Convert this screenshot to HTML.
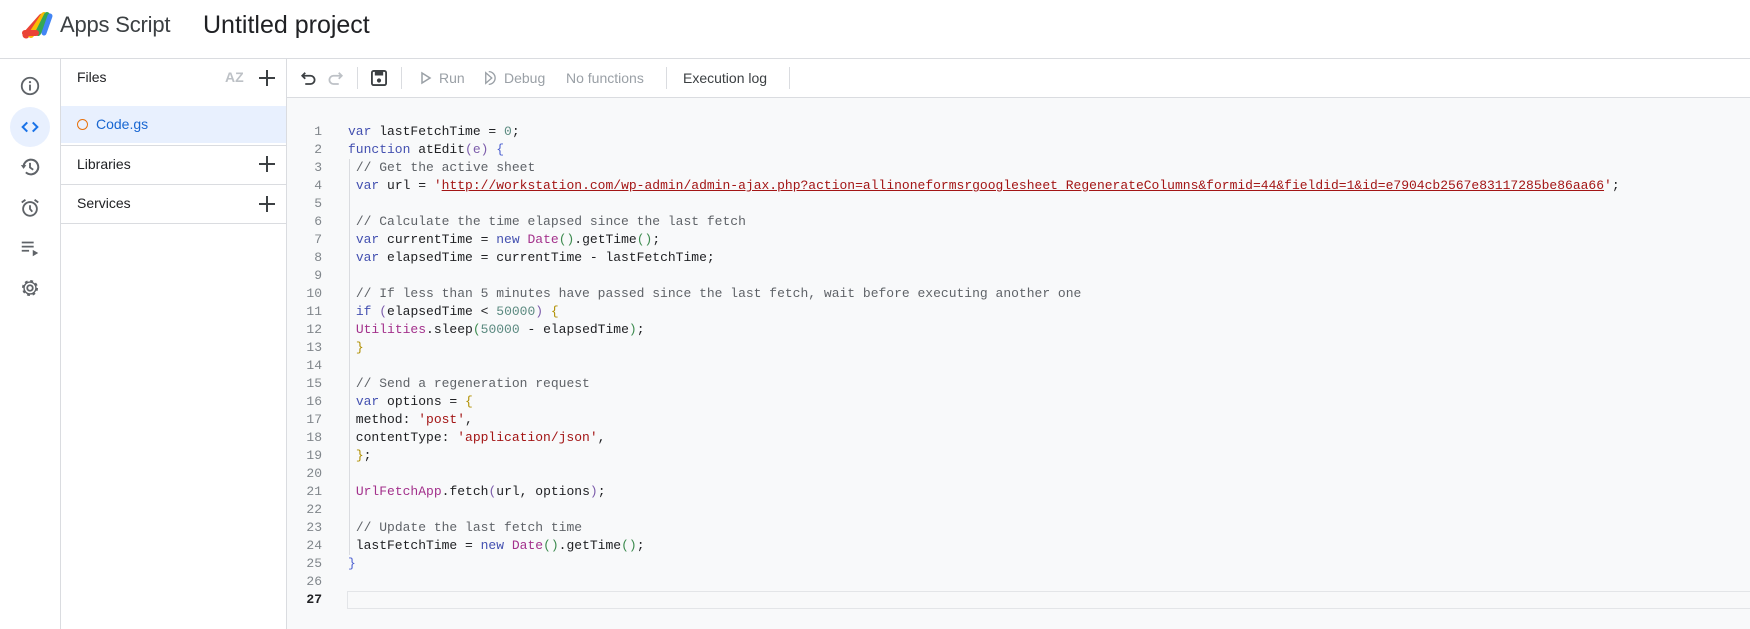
<!DOCTYPE html>
<html><head><meta charset="utf-8"><style>
*{margin:0;padding:0;box-sizing:border-box}
body{width:1750px;height:629px;overflow:hidden;background:#fff;font-family:"Liberation Sans",Arial,sans-serif;color:#202124;position:relative}
.a{position:absolute}
.hl{border-bottom:1px solid #dadce0}
.code{position:absolute;left:287px;top:98px;width:1463px;height:531px;background:#f8f9fa}
.ln{position:absolute;left:0;width:322px;text-align:right;font:13px/18px "Liberation Mono",monospace;color:#80868b}
.cl{position:absolute;left:348px;white-space:pre;font:13px/18px "Liberation Mono",monospace;color:#202124}
.k{color:#4350b0}.c{color:#5f6368}.s{color:#a31515}.m{color:#a3318c}.n{color:#5b8a80}.g{color:#3d8b4f}.y{color:#b08f00}.p{color:#7c5cab}.b{color:#4a5fd0}
.u{text-decoration:underline;text-decoration-color:#a31515}
.tb{position:absolute;top:69px;font-size:14px;line-height:18px}
.dv{position:absolute;top:67px;width:1px;height:22px;background:#dadce0}
.ic{position:absolute;left:19px;width:22px;height:22px}
.pl{position:absolute;left:259px;width:16px;height:16px}
</style></head><body>
<div class="a hl" style="left:0;top:0;width:1750px;height:59px"></div>
<svg class="a" style="left:22px;top:11px" width="32" height="28" viewBox="0 0 32 28">
<path d="M4 24 L20 6" stroke="#ea4335" stroke-width="7" stroke-linecap="round"/>
<path d="M9 24 L22 4" stroke="#fbbc04" stroke-width="6" stroke-linecap="round"/>
<path d="M16 22 L25 4" stroke="#34a853" stroke-width="6" stroke-linecap="round"/>
<path d="M22 22 L28 5" stroke="#4285f4" stroke-width="5" stroke-linecap="round"/>
<path d="M3 22 L14 22" stroke="#ea4335" stroke-width="6" stroke-linecap="round"/>
</svg>
<div class="a" style="left:60px;top:12px;font-size:22px;color:#3c4043;letter-spacing:-0.2px">Apps Script</div>
<div class="a" style="left:203px;top:11px;font-size:25px;color:#202124">Untitled project</div>
<div class="a" style="left:60px;top:59px;width:1px;height:570px;background:#dadce0"></div>
<svg class="ic" style="top:75px" viewBox="0 0 24 24"><circle cx="12" cy="12" r="9" fill="none" stroke="#5f6368" stroke-width="2"/><rect x="11" y="10.5" width="2" height="6.5" fill="#5f6368"/><circle cx="12" cy="7.8" r="1.2" fill="#5f6368"/></svg>
<div class="a" style="left:10px;top:107px;width:40px;height:40px;border-radius:50%;background:#e8f0fe"></div>
<svg class="ic" style="top:116px" viewBox="0 0 24 24"><path d="M9 7 L4 12 L9 17 M15 7 L20 12 L15 17" fill="none" stroke="#1a73e8" stroke-width="2.2"/></svg>
<svg class="ic" style="top:156px" viewBox="0 0 24 24"><path d="M5 12 A8 8 0 1 1 7.5 17.8" fill="none" stroke="#5f6368" stroke-width="2.2"/><path d="M2 10 L5 14 L8 10" fill="#5f6368"/><path d="M12 7.5 V12.5 L15.5 15" fill="none" stroke="#5f6368" stroke-width="2"/></svg>
<svg class="ic" style="top:197px" viewBox="0 0 24 24"><circle cx="12" cy="13" r="7.5" fill="none" stroke="#5f6368" stroke-width="2"/><path d="M12 9 V13 L14.5 16" fill="none" stroke="#5f6368" stroke-width="2"/><path d="M3 6 L7 3 M21 6 L17 3" stroke="#5f6368" stroke-width="2"/></svg>
<svg class="ic" style="top:237px" viewBox="0 0 24 24"><path d="M3 6 H16 M3 10.5 H16 M3 15 H11" stroke="#5f6368" stroke-width="2"/><path d="M15 14 L21 17.5 L15 21 Z" fill="#5f6368"/></svg>
<svg class="ic" style="top:277px" viewBox="0 0 24 24"><circle cx="12" cy="12" r="3" fill="none" stroke="#5f6368" stroke-width="2"/><circle cx="12" cy="12" r="7.5" fill="none" stroke="#5f6368" stroke-width="2.5" stroke-dasharray="3 2.9"/><circle cx="12" cy="12" r="6.5" fill="none" stroke="#5f6368" stroke-width="1.5"/></svg>
<div class="a" style="left:286px;top:59px;width:1px;height:570px;background:#dadce0"></div>
<div class="a" style="left:77px;top:69px;font-size:14px;color:#202124">Files</div>
<div class="a" style="left:225px;top:69px;font-size:14px;font-weight:bold;color:#bdc1c6">AZ</div>
<svg class="pl" style="top:70px" viewBox="0 0 16 16"><path d="M8 0 V16 M0 8 H16" stroke="#3c4043" stroke-width="2"/></svg>
<div class="a" style="left:61px;top:106px;width:225px;height:37px;background:#e8f0fe"></div>
<div class="a" style="left:77px;top:119px;width:11px;height:11px;border:1.5px solid #e8710a;border-radius:50%"></div>
<div class="a" style="left:96px;top:116px;font-size:14px;color:#1967d2">Code.gs</div>
<div class="a" style="left:61px;top:145px;width:225px;height:1px;background:#dadce0"></div>
<div class="a" style="left:77px;top:156px;font-size:14px">Libraries</div>
<svg class="pl" style="top:156px" viewBox="0 0 16 16"><path d="M8 0 V16 M0 8 H16" stroke="#3c4043" stroke-width="2"/></svg>
<div class="a" style="left:61px;top:184px;width:225px;height:1px;background:#dadce0"></div>
<div class="a" style="left:77px;top:195px;font-size:14px">Services</div>
<svg class="pl" style="top:196px" viewBox="0 0 16 16"><path d="M8 0 V16 M0 8 H16" stroke="#3c4043" stroke-width="2"/></svg>
<div class="a" style="left:61px;top:223px;width:225px;height:1px;background:#dadce0"></div>
<div class="a" style="left:287px;top:97px;width:1463px;height:1px;background:#dadce0"></div>
<svg class="a" style="left:300px;top:69px" width="18" height="18" viewBox="0 0 24 24"><path d="M7 5 L3 9 L7 13 M3 9 H14 A5.5 5.5 0 0 1 14 20 H7" fill="none" stroke="#3c4043" stroke-width="2.4"/></svg>
<svg class="a" style="left:326px;top:69px" width="18" height="18" viewBox="0 0 24 24"><path d="M17 5 L21 9 L17 13 M21 9 H10 A5.5 5.5 0 0 0 10 20 H17" fill="none" stroke="#bdc1c6" stroke-width="2.4"/></svg>
<div class="dv" style="left:357px"></div>
<svg class="a" style="left:369px;top:68px" width="20" height="20" viewBox="0 0 24 24"><rect x="3.5" y="3.5" width="17" height="17" rx="2" fill="none" stroke="#3c4043" stroke-width="2.2"/><rect x="7" y="4" width="10" height="5" fill="#3c4043"/><circle cx="12" cy="15" r="2.5" fill="#3c4043"/></svg>
<div class="dv" style="left:401px"></div>
<svg class="a" style="left:420px;top:71px" width="12" height="14" viewBox="0 0 12 14"><path d="M2 2 L10 7 L2 12 Z" fill="none" stroke="#9aa0a6" stroke-width="1.5"/></svg>
<div class="tb" style="left:439px;color:#9aa0a6">Run</div>
<svg class="a" style="left:482px;top:69px" width="18" height="18" viewBox="0 0 24 24"><path d="M5 5 L13 12 L5 19 Z" fill="none" stroke="#9aa0a6" stroke-width="1.8"/><path d="M9 3.5 A8.5 8.5 0 1 1 9 20.5" fill="none" stroke="#9aa0a6" stroke-width="1.8"/></svg>
<div class="tb" style="left:504px;color:#9aa0a6">Debug</div>
<div class="tb" style="left:566px;color:#9aa0a6">No functions</div>
<div class="dv" style="left:666px"></div>
<div class="tb" style="left:683px;color:#3c4043">Execution log</div>
<div class="dv" style="left:789px"></div>
<div class="code"></div>
<div class="a" style="left:349px;top:159px;width:1px;height:396px;background:#dadce0"></div>
<div class="a" style="left:347px;top:591px;width:1403px;height:18px;border:1px solid #e3e5e8;border-right:none"></div>
<div class="ln" style="top:123px">1</div><div class="ln" style="top:141px">2</div><div class="ln" style="top:159px">3</div><div class="ln" style="top:177px">4</div><div class="ln" style="top:195px">5</div><div class="ln" style="top:213px">6</div><div class="ln" style="top:231px">7</div><div class="ln" style="top:249px">8</div><div class="ln" style="top:267px">9</div><div class="ln" style="top:285px">10</div><div class="ln" style="top:303px">11</div><div class="ln" style="top:321px">12</div><div class="ln" style="top:339px">13</div><div class="ln" style="top:357px">14</div><div class="ln" style="top:375px">15</div><div class="ln" style="top:393px">16</div><div class="ln" style="top:411px">17</div><div class="ln" style="top:429px">18</div><div class="ln" style="top:447px">19</div><div class="ln" style="top:465px">20</div><div class="ln" style="top:483px">21</div><div class="ln" style="top:501px">22</div><div class="ln" style="top:519px">23</div><div class="ln" style="top:537px">24</div><div class="ln" style="top:555px">25</div><div class="ln" style="top:573px">26</div><div class="ln" style="top:591px;color:#202124;font-weight:bold">27</div>
<div class="cl" style="top:123px"><span class="k">var</span> lastFetchTime = <span class="n">0</span>;</div>
<div class="cl" style="top:141px"><span class="k">function</span> atEdit<span class="p">(e)</span> <span class="b">{</span></div>
<div class="cl" style="top:159px"> <span class="c">// Get the active sheet</span></div>
<div class="cl" style="top:177px"> <span class="k">var</span> url = <span class="s">'<span class="u">http://workstation.com/wp-admin/admin-ajax.php?action=allinoneformsrgooglesheet_RegenerateColumns&amp;formid=44&amp;fieldid=1&amp;id=e7904cb2567e83117285be86aa66</span>'</span>;</div>
<div class="cl" style="top:213px"> <span class="c">// Calculate the time elapsed since the last fetch</span></div>
<div class="cl" style="top:231px"> <span class="k">var</span> currentTime = <span class="k">new</span> <span class="m">Date</span><span class="g">()</span>.getTime<span class="g">()</span>;</div>
<div class="cl" style="top:249px"> <span class="k">var</span> elapsedTime = currentTime - lastFetchTime;</div>
<div class="cl" style="top:285px"> <span class="c">// If less than 5 minutes have passed since the last fetch, wait before executing another one</span></div>
<div class="cl" style="top:303px"> <span class="k">if</span> <span class="p">(</span>elapsedTime &lt; <span class="n">50000</span><span class="p">)</span> <span class="y">{</span></div>
<div class="cl" style="top:321px"> <span class="m">Utilities</span>.sleep<span class="g">(</span><span class="n">50000</span> - elapsedTime<span class="g">)</span>;</div>
<div class="cl" style="top:339px"> <span class="y">}</span></div>
<div class="cl" style="top:375px"> <span class="c">// Send a regeneration request</span></div>
<div class="cl" style="top:393px"> <span class="k">var</span> options = <span class="y">{</span></div>
<div class="cl" style="top:411px"> method: <span class="s">'post'</span>,</div>
<div class="cl" style="top:429px"> contentType: <span class="s">'application/json'</span>,</div>
<div class="cl" style="top:447px"> <span class="y">}</span>;</div>
<div class="cl" style="top:483px"> <span class="m">UrlFetchApp</span>.fetch<span class="p">(</span>url, options<span class="p">)</span>;</div>
<div class="cl" style="top:519px"> <span class="c">// Update the last fetch time</span></div>
<div class="cl" style="top:537px"> lastFetchTime = <span class="k">new</span> <span class="m">Date</span><span class="g">()</span>.getTime<span class="g">()</span>;</div>
<div class="cl" style="top:555px"><span class="b">}</span></div>
</body></html>
